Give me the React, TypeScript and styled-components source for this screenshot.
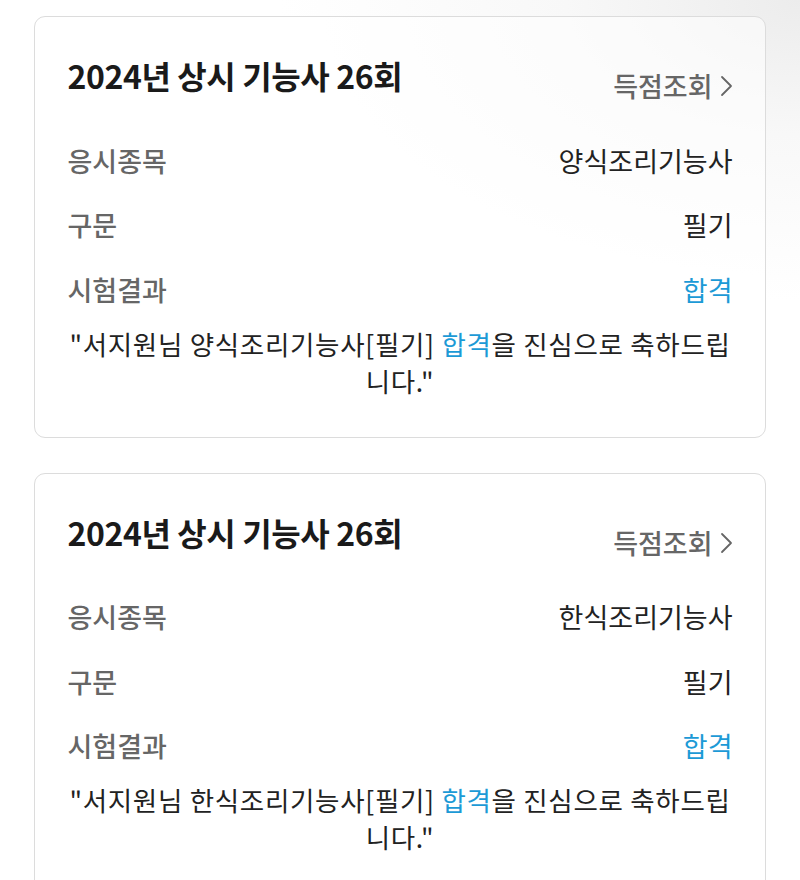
import React from "react";
import styled, { createGlobalStyle } from "styled-components";

const GlobalStyle = createGlobalStyle`
  html, body {
    margin: 0;
    padding: 0;
    background: #fff;
  }
  body {
    font-family: "Noto Sans CJK KR", "Noto Sans", sans-serif;
    color: #222;
  }
`;

const Page = styled.div`
  min-height: 880px;
  padding: 16px 34px 0;
  box-sizing: border-box;
  display: flex;
  flex-direction: column;
  gap: 35px;
  background: radial-gradient(ellipse 520px 300px at 100% 0%, #ececec 0%, #f8f8f8 45%, #ffffff 100%);
`;

const Card = styled.section`
  border: 1.5px solid #dcdcdc;
  border-radius: 11px;
  padding: 38px 32.5px 38px;
  background: rgba(255, 255, 255, 0.55);
`;

const Header = styled.div`
  display: flex;
  justify-content: space-between;
  align-items: flex-start;
  margin-bottom: 25px;
`;

const Title = styled.h2`
  margin: 0;
  font-size: 32px;
  line-height: 40px;
  font-weight: 700;
  color: #1a1a1a;
  letter-spacing: -0.4px;
`;

const ScoreLink = styled.a`
  margin-top: 14px;
  display: flex;
  align-items: center;
  gap: 7px;
  font-size: 27px;
  line-height: 34px;
  font-weight: 500;
  color: #666;
  text-decoration: none;
  cursor: pointer;
`;

const Row = styled.div`
  display: flex;
  justify-content: space-between;
  align-items: center;
  height: 64.5px;
  font-size: 27px;
`;

const Label = styled.span`
  color: #666;
  font-weight: 500;
`;

const Value = styled.span<{ $pass?: boolean }>`
  color: ${(p) => (p.$pass ? "#1c9ad6" : "#222")};
`;

const Message = styled.p`
  margin: 3px 0 0;
  text-align: center;
  font-size: 26.5px;
  line-height: 37px;
  letter-spacing: 0.7px;
  color: #222;
`;

const Pass = styled.span`
  color: #1c9ad6;
`;

const Chevron = () => (
  <svg width="13" height="22" viewBox="0 0 13 22" fill="none">
    <path d="M2 2l9 9-9 9" stroke="#666" strokeWidth="1.8" strokeLinecap="round" strokeLinejoin="round" />
  </svg>
);

type Result = {
  title: string;
  subject: string;
  kind: string;
  result: string;
  name: string;
};

const results: Result[] = [
  { title: "2024년 상시 기능사 26회", subject: "양식조리기능사", kind: "필기", result: "합격", name: "서지원" },
  { title: "2024년 상시 기능사 26회", subject: "한식조리기능사", kind: "필기", result: "합격", name: "서지원" },
];

const ResultCard: React.FC<{ r: Result }> = ({ r }) => (
  <Card>
    <Header>
      <Title>{r.title}</Title>
      <ScoreLink>
        득점조회
        <Chevron />
      </ScoreLink>
    </Header>
    <Row>
      <Label>응시종목</Label>
      <Value>{r.subject}</Value>
    </Row>
    <Row>
      <Label>구문</Label>
      <Value>{r.kind}</Value>
    </Row>
    <Row>
      <Label>시험결과</Label>
      <Value $pass>{r.result}</Value>
    </Row>
    <Message>
      "{r.name}님 {r.subject}[{r.kind}] <Pass>{r.result}</Pass>을 진심으로 축하드립니다."
    </Message>
  </Card>
);

export default function App() {
  return (
    <>
      <GlobalStyle />
      <Page>
        {results.map((r, i) => (
          <ResultCard key={i} r={r} />
        ))}
      </Page>
    </>
  );
}
